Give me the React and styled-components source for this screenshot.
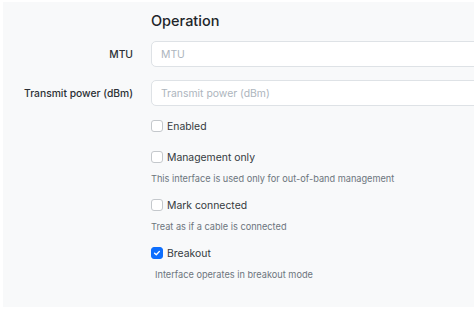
import React from "react";
import styled, { createGlobalStyle } from "styled-components";

const GlobalStyle = createGlobalStyle`
  html, body {
    margin: 0;
    padding: 0;
    background: #ffffff;
    font-family: Inter, "Noto Sans", "Liberation Sans", sans-serif;
    color: #212529;
  }
`;

const Card = styled.div`
  margin: 2px 0 0 3px;
  height: 305px;
  background: #f8f9fa;
  overflow: hidden;
  box-sizing: border-box;
  padding-top: 10px;
`;

const Heading = styled.h5`
  margin: 0 0 11px 148px;
  font-size: 14.5px;
  font-weight: 500;
  line-height: 18px;
  color: #212529;
`;

const FieldRow = styled.div`
  display: grid;
  grid-template-columns: 130px 1fr;
  column-gap: 18px;
  align-items: center;
  margin-bottom: ${(p) => p.$gap || 12}px;
`;

const Label = styled.label`
  text-align: right;
  font-size: 10.3px;
  font-weight: 500;
  color: #2b3035;
`;

const Input = styled.input`
  box-sizing: border-box;
  width: 340px;
  height: 26px;
  border: 1px solid #dee2e6;
  border-radius: 5px;
  background: #ffffff;
  padding: 0 9px;
  font-family: inherit;
  font-size: 10.4px;
  color: #212529;
  outline: none;

  &::placeholder {
    color: #adb5bd;
  }
`;

const CheckGroup = styled.div`
  margin-left: 148px;
  margin-bottom: ${(p) => p.$gap}px;
`;

const CheckLine = styled.label`
  display: flex;
  align-items: center;
  gap: 4px;
  font-size: 10.4px;
  color: #343a40;
  height: 16px;
`;

const Box = styled.span`
  box-sizing: border-box;
  width: 12px;
  height: 12px;
  border-radius: 3px;
  border: 1px solid ${(p) => (p.$checked ? "#0d6efd" : "#c4c8cc")};
  background: ${(p) => (p.$checked ? "#0d6efd" : "#ffffff")};
  display: flex;
  align-items: center;
  justify-content: center;
  flex-shrink: 0;
`;

const Help = styled.div`
  margin-top: 8px;
  padding-left: ${(p) => p.$indent || 0}px;
  font-size: 9.2px;
  color: #6c757d;
  line-height: 12px;
`;

const Check = ({ label, help, checked, gap, indent }) => (
  <CheckGroup $gap={gap}>
    <CheckLine>
      <Box $checked={checked}>
        {checked && (
          <svg width="8" height="8" viewBox="0 0 8 8">
            <path
              d="M1.6 4.2 L3.3 5.8 L6.4 2.4"
              fill="none"
              stroke="#fff"
              strokeWidth="1.4"
              strokeLinecap="round"
              strokeLinejoin="round"
            />
          </svg>
        )}
      </Box>
      {label}
    </CheckLine>
    {help && <Help $indent={indent}>{help}</Help>}
  </CheckGroup>
);

export default function App() {
  return (
    <>
      <GlobalStyle />
      <Card>
        <Heading>Operation</Heading>
        <FieldRow $gap={13}>
          <Label>MTU</Label>
          <Input placeholder="MTU" />
        </FieldRow>
        <FieldRow $gap={12}>
          <Label>Transmit power (dBm)</Label>
          <Input placeholder="Transmit power (dBm)" />
        </FieldRow>
        <Check label="Enabled" gap={15} />
        <Check
          label="Management only"
          help="This interface is used only for out-of-band management"
          gap={12}
        />
        <Check
          label="Mark connected"
          help="Treat as if a cable is connected"
          gap={12}
        />
        <Check
          label="Breakout"
          checked
          help="Interface operates in breakout mode"
          indent={4}
          gap={0}
        />
      </Card>
    </>
  );
}
